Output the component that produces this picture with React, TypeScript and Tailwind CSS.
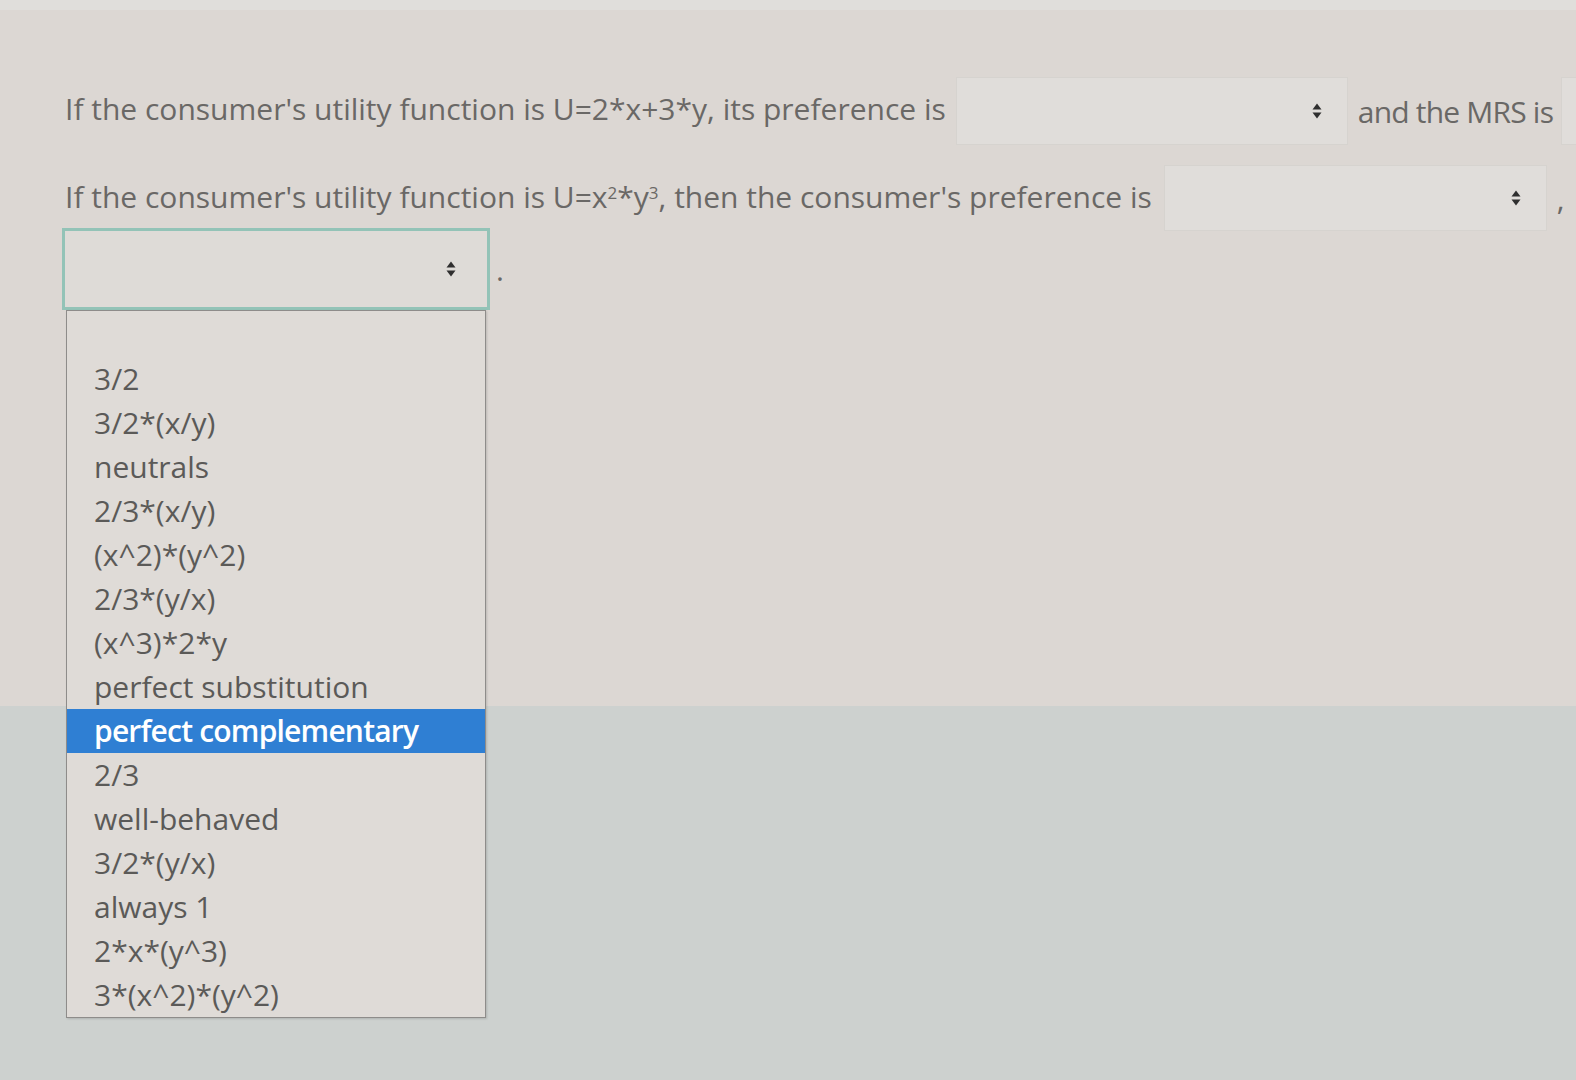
import React from "react";

const options = [
  "",
  "3/2",
  "3/2*(x/y)",
  "neutrals",
  "2/3*(x/y)",
  "(x^2)*(y^2)",
  "2/3*(y/x)",
  "(x^3)*2*y",
  "perfect substitution",
  "perfect complementary",
  "2/3",
  "well-behaved",
  "3/2*(y/x)",
  "always 1",
  "2*x*(y^3)",
  "3*(x^2)*(y^2)",
];

function Arrows() {
  return (
    <svg width="10" height="16" viewBox="0 0 10 16" className="shrink-0">
      <path d="M5 0.5 L9.5 6.5 H0.5 Z" fill="#2f2f2f" />
      <path d="M5 15.5 L9.5 9.5 H0.5 Z" fill="#2f2f2f" />
    </svg>
  );
}

function FakeSelect({ className }: { className: string }) {
  return (
    <div className={"flex shrink-0 items-center justify-end bg-[#e0ddda] border border-[#d6d3cf] " + className}>
      <Arrows />
    </div>
  );
}

export default function App() {
  const selected = "perfect complementary";

  return (
    <div
      className="relative w-[1576px] h-[1080px] overflow-hidden text-[#6a6866]"
      style={{ fontFamily: '"Open Sans", "Noto Sans", sans-serif' }}
    >
      {/* upper part of the page */}
      <div className="h-[706px] bg-[#dcd7d3] border-t-[10px] border-[#e0dedb] pl-[65px] pt-[67px]">
        {/* question 1 */}
        <div className="flex items-center h-[68px] text-[30px] whitespace-nowrap">
          <span className="-mt-[6px]">If the consumer's utility function is U=2*x+3*y, its preference is</span>
          <FakeSelect className="ml-[10px] w-[392px] h-[68px] pr-[25px]" />
          <span className="ml-[10px] tracking-[-0.8px]">and the MRS is</span>
          <div className="ml-[8px] w-[40px] h-[68px] shrink-0 bg-[#e0ddda] border border-[#d6d3cf]" />
        </div>

        {/* question 2 */}
        <div className="flex items-center h-[66px] mt-[20px] text-[30px] whitespace-nowrap">
          <span className="-mt-[4px]">
            If the consumer's utility function is U=x<sup className="text-[17px]">2</sup>*y
            <sup className="text-[17px]">3</sup>, then the consumer's preference is
          </span>
          <FakeSelect className="ml-[12px] w-[383px] h-[66px] pr-[25px]" />
          <span className="ml-[10px]">,</span>
        </div>

        <div className="flex items-center mt-[-3px] -ml-[3px]">
          <div className="relative">
            <div className="flex items-center justify-end w-[428px] h-[82px] border-[3px] border-[#93c3b7] bg-[#dedbd7] pr-[31px]">
              <Arrows />
            </div>
            {/* open listbox */}
            <ul className="absolute left-[4px] top-full w-[420px] bg-[#dfdbd7] border border-[#8e8c8a] pt-[2px] text-[30px] text-[#5b5a58] shadow-[1px_1px_2px_rgba(0,0,0,0.15)] z-10">
              {options.map((o, i) => (
                <li
                  key={i}
                  className={
                    "h-[44px] leading-[44px] pl-[27px] whitespace-nowrap " +
                    (o === selected ? "bg-[#2f7fd3] text-white font-semibold tracking-[-0.8px]" : "")
                  }
                >
                  {o}
                </li>
              ))}
            </ul>
          </div>
          <span className="ml-[6px] text-[30px]">.</span>
        </div>
      </div>

      {/* lower part of the page */}
      <div className="h-[374px] bg-[#cdd1cf]" />
    </div>
  );
}
